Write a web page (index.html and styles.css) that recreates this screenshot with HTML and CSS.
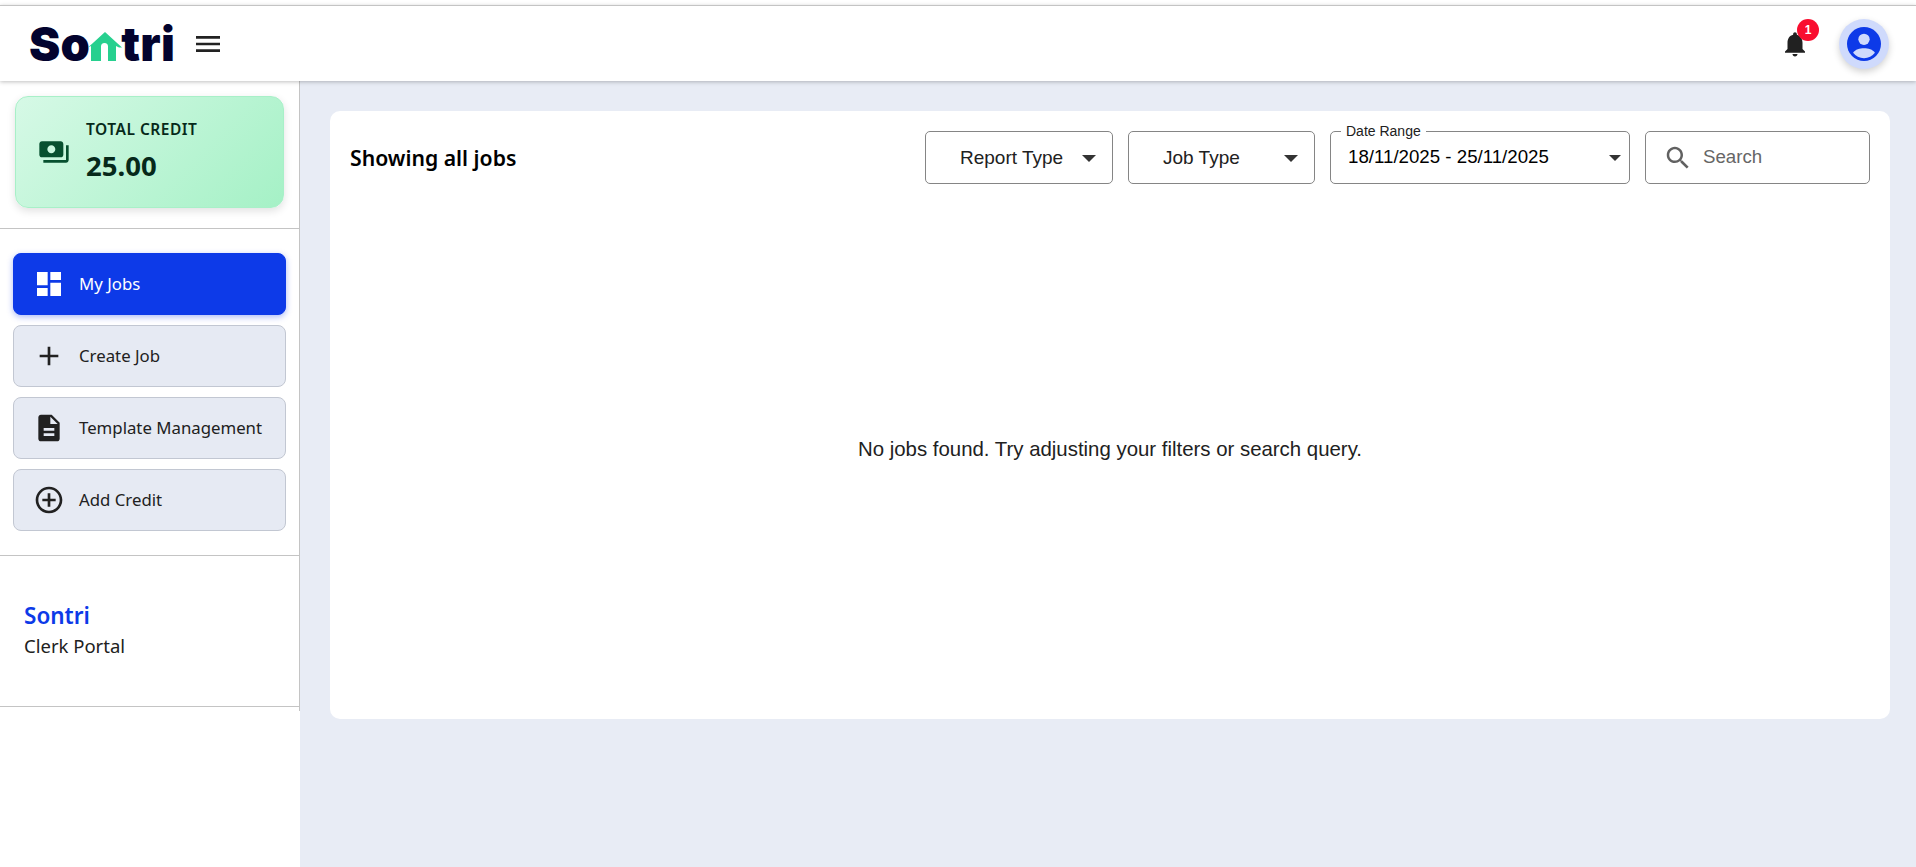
FILE: index.html
```html
<!DOCTYPE html>
<html lang="en">
<head>
<meta charset="utf-8">
<title>Sontri Clerk Portal</title>
<link rel="stylesheet" href="styles.css">
</head>
<body>
<div class="app">
  <header class="topbar">
    <div class="brand">
      <div class="logo"><span>So</span><svg class="logo-house" viewBox="0 0 34 29"><path d="M0 15.500 17 0l17 15.500h-3L28 14v15h-8V14.500a3.500 3.500 0 0 0-7 0V29H3V14z" fill="#27d08f"/></svg><span>tri</span></div>
      <svg class="menu-icon" viewBox="0 0 24 24"><path d="M3 18h18v-2H3zm0-5h18v-2H3zm0-7v2h18V6z" fill="#222"/></svg>
    </div>
    <div class="top-actions">
      <div class="bell">
        <svg class="bell-icon" viewBox="0 0 24 24"><path d="M12 22c1.100 0 2-.9 2-2h-4c0 1.100.9 2 2 2m6-6v-5c0-3.070-1.630-5.640-4.500-6.320V4c0-.83-.67-1.500-1.500-1.500s-1.500.67-1.500 1.500v.68C7.640 5.360 6 7.920 6 11v5l-2 2v1h16v-1z" fill="#212121"/></svg>
        <span class="badge">1</span>
      </div>
      <div class="avatar">
        <svg viewBox="0 0 24 24"><circle cx="12" cy="12" r="12" fill="#0d3ae8"/><circle cx="12" cy="8.700" r="4" fill="#cfdafc"/><path d="M4.300 18.200C5.800 15.800 9 15 12 15s6.200.8 7.700 3.200C17.900 20.500 15.100 22 12 22s-5.900-1.500-7.700-3.800z" fill="#cfdafc"/></svg>
      </div>
    </div>
  </header>
  <div class="body-row">
    <aside class="sidebar">
      <div class="sidebar-inner">
        <section class="credit-section">
          <div class="credit-card">
            <svg class="credit-icon" viewBox="0 0 24 24"><path d="M19 14V6c0-1.100-.9-2-2-2H3c-1.100 0-2 .9-2 2v8c0 1.100.9 2 2 2h14c1.100 0 2-.9 2-2m-9-1c-1.660 0-3-1.340-3-3s1.340-3 3-3 3 1.340 3 3-1.340 3-3 3m13-6v11c0 1.100-.9 2-2 2H4v-2h17V7z" fill="#07502f"/></svg>
            <div class="credit-text">
              <div class="credit-label">TOTAL CREDIT</div>
              <div class="credit-value">25.00</div>
            </div>
          </div>
        </section>
        <nav class="nav">
          <a class="nav-item active">
            <svg class="nav-icon" viewBox="0 0 24 24"><path d="M3 13h8V3H3zm0 8h8v-6H3zm10 0h8V11h-8zm0-18v6h8V3z" fill="#fff"/></svg>
            <span>My Jobs</span>
          </a>
          <a class="nav-item">
            <svg class="nav-icon" viewBox="0 0 24 24"><path d="M19 13h-6v6h-2v-6H5v-2h6V5h2v6h6z" fill="#212121"/></svg>
            <span>Create Job</span>
          </a>
          <a class="nav-item">
            <svg class="nav-icon" viewBox="0 0 24 24"><path d="M14 2H6c-1.100 0-1.990.9-1.990 2L4 20c0 1.100.89 2 1.990 2H18c1.100 0 2-.9 2-2V8zm2 16H8v-2h8zm0-4H8v-2h8zm-3-5V3.500L18.500 9z" fill="#212121"/></svg>
            <span>Template Management</span>
          </a>
          <a class="nav-item">
            <svg class="nav-icon" viewBox="0 0 24 24"><path d="M13 7h-2v4H7v2h4v4h2v-4h4v-2h-4zm-1-5C6.480 2 2 6.480 2 12s4.480 10 10 10 10-4.480 10-10S17.520 2 12 2m0 18c-4.410 0-8-3.590-8-8s3.590-8 8-8 8 3.590 8 8-3.590 8-8 8" fill="#212121"/></svg>
            <span>Add Credit</span>
          </a>
        </nav>
        <section class="portal">
          <div class="portal-name">Sontri</div>
          <div class="portal-role">Clerk Portal</div>
        </section>
      </div>
    </aside>
    <main class="main">
      <div class="jobs-card">
        <div class="toolbar">
          <h1 class="toolbar-title">Showing all jobs</h1>
          <div class="filters">
            <div class="select select-report"><span>Report Type</span><i class="caret"></i></div>
            <div class="select select-job"><span>Job Type</span><i class="caret"></i></div>
            <div class="select select-date">
              <span class="float-label">Date Range</span>
              <span class="date-value">18/11/2025 - 25/11/2025</span><i class="caret"></i>
            </div>
            <div class="search">
              <svg class="search-icon" viewBox="0 0 24 24"><path d="M15.500 14h-.79l-.28-.27C15.410 12.590 16 11.110 16 9.500 16 5.910 13.090 3 9.500 3S3 5.910 3 9.500 5.910 16 9.500 16c1.610 0 3.090-.59 4.230-1.570l.27.28v.79l5 4.990L20.490 19zm-6 0C7.010 14 5 11.990 5 9.500S7.010 5 9.500 5 14 7.010 14 9.500 11.990 14 9.500 14" fill="#616161"/></svg>
              <span class="search-text">Search</span>
            </div>
          </div>
        </div>
        <div class="empty">No jobs found. Try adjusting your filters or search query.</div>
      </div>
    </main>
  </div>
</div>
</body>
</html>
```
FILE: styles.css
```css
* { box-sizing: border-box; }
html, body { margin: 0; height: 100%; overflow: hidden; }
body { background: #fff; font-family: "Noto Sans", "Open Sans", sans-serif; color: #212121; }
.app { height: 867px; display: flex; flex-direction: column; padding-top: 5px; }

.topbar {
  height: 76px; flex: none; display: flex; align-items: center; justify-content: space-between;
  background: #fff; border-top: 1px solid #c4c4c4; padding: 0 27px 0 29px;
  box-shadow: 0 1px 4px rgba(0,0,0,.25); position: relative; z-index: 2;
}
.brand { display: flex; align-items: center; gap: 17px; }
.logo { display: flex; align-items: flex-end; font-family: Inter, sans-serif; font-weight: 900; font-size: 47px; line-height: 40px; height: 40px; color: #03032e; letter-spacing: .3px; }
.logo-house { width: 34px; height: 29px; margin: 0 -1px 3px -2px; flex: none; }
.menu-icon { width: 32px; height: 32px; display: block; }
.top-actions { display: flex; align-items: center; gap: 29px; }
.bell { position: relative; width: 30px; height: 30px; }
.bell-icon { width: 30px; height: 30px; display: block; }
.badge {
  position: absolute; left: 17px; top: -10px; width: 22px; height: 22px; border-radius: 50%;
  background: #f90d2f; color: #fff; font: 700 12px/22px "Liberation Sans", sans-serif; text-align: center;
}
.avatar {
  width: 50px; height: 50px; border-radius: 50%; background: #cfdafc; padding: 8px;
  box-shadow: 0 3px 7px rgba(0,0,0,.18);
}
.avatar svg { display: block; width: 34px; height: 34px; }

.body-row { flex: 1; display: flex; min-height: 0; }
.sidebar { width: 300px; flex: none; background: #fff; }
.sidebar-inner { height: 630px; border-right: 1px solid #c4c4c4; }
.credit-section { height: 148px; padding: 15px 15px 0; border-bottom: 1px solid #c4c4c4; }
.credit-card {
  height: 112px; width: 269px; border-radius: 13px; border: 1px solid #a8f0c8;
  background: linear-gradient(135deg, #d6f9e6 0%, #a5f1c6 100%);
  box-shadow: 0 3px 8px rgba(0,0,0,.12); display: flex; align-items: center; padding-left: 22px; gap: 16px;
}
.credit-icon { width: 32px; height: 32px; flex: none; }
.credit-label { font-size: 15.500px; line-height: 20px; font-weight: 600; color: #06291a; letter-spacing: .5px; margin-top: -2px; }
.credit-value { font-size: 27.500px; line-height: 36px; font-weight: 700; color: #06291a; margin-top: 9px; }
.nav { height: 327px; padding: 24px 13px 0 13px; border-bottom: 1px solid #c4c4c4; display: flex; flex-direction: column; gap: 10px; }
.nav-item {
  height: 62px; width: 273px; flex: none; display: flex; align-items: center; padding-left: 19px; gap: 14px;
  background: #e6eaf3; border: 1px solid #c2c7d2; border-radius: 8px; font-size: 16.800px; color: #212121; padding-bottom: 2px;
}
.nav-item .nav-icon { margin-bottom: -2px; }
.nav-item.active { background: #0d3ae8; border-color: #0d3ae8; color: #fff; box-shadow: 0 2px 6px rgba(13,58,232,.35); }
.nav-icon { width: 32px; height: 32px; flex: none; }
.portal { height: 151px; padding: 44px 0 0 24px; border-bottom: 1px solid #c4c4c4; }
.portal-name { font-size: 22.500px; line-height: 32px; font-weight: 600; color: #0d3ae8; margin-bottom: 1px; }
.portal-role { font-size: 18.500px; line-height: 25px; color: #212121; }

.main { flex: 1; background: #e8ecf5; padding: 30px 26px 0 30px; }
.jobs-card { height: 608px; background: #fff; border-radius: 10px; padding: 20px 20px 0; display: flex; flex-direction: column; }
.toolbar { display: flex; align-items: center; justify-content: space-between; }
.toolbar-title { margin: 0; font-size: 21.200px; line-height: 53px; font-weight: 600; color: #000; }
.filters { display: flex; gap: 15px; }
.select, .search {
  height: 53px; border: 1px solid #858585; border-radius: 5px; background: #fff; display: flex; align-items: center;
  position: relative; font-family: "Liberation Sans", sans-serif; font-size: 19px; color: #212121;
}
.select-report { width: 188px; padding-left: 34px; }
.select-job { width: 187px; padding-left: 34px; }
.select-date { width: 300px; padding-left: 17px; color: #000; font-size: 18.700px; padding-bottom: 2px; }
.search { width: 225px; padding-left: 17px; gap: 10px; color: #666; font-size: 18.700px; }
.search-text { margin-bottom: 2px; }
.caret { position: absolute; right: 16px; top: 23px; width: 0; height: 0; border: 7px solid transparent; border-top-color: #333; border-bottom: 0; }
.select-date .caret { right: 8px; border-width: 6px; border-bottom: 0; }
.float-label { position: absolute; left: 10px; top: -9px; background: #fff; padding: 0 5px 0 5px; font-size: 14px; line-height: 16px; color: #212121; }
.search-icon { width: 30px; height: 30px; flex: none; }
.empty { flex: 1; display: flex; align-items: flex-start; justify-content: center; padding-top: 252px; font-family: "Liberation Sans", sans-serif; font-size: 20.400px; line-height: 26px; color: #212121; }
```
